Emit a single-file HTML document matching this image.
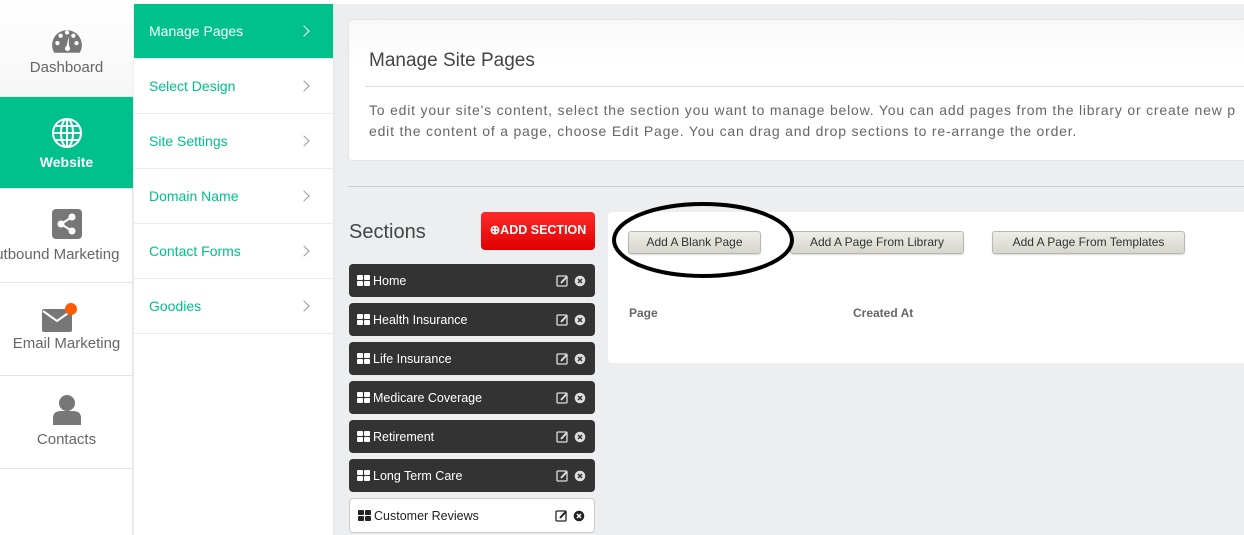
<!DOCTYPE html>
<html><head><style>
*{box-sizing:border-box;margin:0;padding:0}
body{width:1244px;height:535px;overflow:hidden;background:#eceef0;font-family:"Liberation Sans",sans-serif;position:relative}
.side{position:absolute;left:0;top:0;width:133px;height:535px;background:#fff;border-right:1px solid #e6e6e6}
.si{position:absolute;left:0;width:133px;text-align:center;color:#666;font-size:14px;border-bottom:1px solid #e3e3e3}
.si svg{display:block;margin:0 auto}
.col{position:absolute;left:134px;top:4px;width:200px;height:531px;background:#fff;border-right:1px solid #e6e6e6}
.ci{height:55px;border-bottom:1px solid #eaeaea;color:#00c08b;font-size:14px;line-height:54px;padding-left:15px;position:relative}
.ci:after{content:"";position:absolute;right:25px;top:23px;width:7px;height:7px;border-top:1px solid #999;border-right:1px solid #999;transform:rotate(45deg)}
.ci.act{background:#00c08b;color:#fff}
.ci.act:after{border-color:#fff}
.card{position:absolute;left:348px;top:19px;width:900px;height:142px;background:linear-gradient(#f8f8f8,#fff 30%);border-radius:4px;border:1px solid #e4e4e4}
.row{position:absolute;left:349px;width:246px;height:33px;background:#333;border-radius:4px;color:#fff;font-size:12.5px;line-height:35px;padding-left:24px}
.row.w{background:#fff;color:#222;border:1px solid #ccc}
.row i{position:absolute;left:8px;top:11px;width:13px;height:11px;display:grid;grid-template-columns:6px 6px;gap:1px 1px}
.row i b{background:currentColor;border-radius:1px;height:5px}
.ic{position:absolute;right:9px;top:11px;width:30px;height:12px}
.btn{position:absolute;top:231px;height:23px;border:1px solid #b9b9b2;border-radius:3px;background:linear-gradient(#eeeee8,#d6d6ce);font-size:12px;color:#333;line-height:21px;text-align:center;box-shadow:0 1px 1px rgba(0,0,0,.15)}
</style></head><body>
<div style="position:absolute;left:0;top:0;width:1244px;height:4px;background:#fff"></div>
<div class="side">
 <div class="si" style="top:0;height:97px;background:linear-gradient(#fff,#f6f6f6)"><svg width="32" height="26" viewBox="0 0 32 26" style="margin-top:27px;width:34px;height:28px"><path d="M4 24A14 14 0 1 1 28 24Z" fill="#777"/><g fill="#fff"><circle cx="7" cy="15" r="2"/><circle cx="10" cy="8" r="2"/><circle cx="16" cy="5" r="2"/><circle cx="22" cy="8" r="2"/><circle cx="25" cy="15" r="2"/><path d="M15 21L17.5 9L18 21Z"/><circle cx="16.5" cy="20" r="2.4"/></g></svg><div style="margin-top:4px;font-size:15px">Dashboard</div></div>
 <div class="si" style="top:97px;height:92px;background:#00c08b;color:#fff;font-weight:bold"><svg width="32" height="32" viewBox="0 0 32 32" style="margin-top:20px" fill="none" stroke="#fff" stroke-width="2"><circle cx="16" cy="16" r="14"/><ellipse cx="16" cy="16" rx="6" ry="14"/><path d="M2 16H30M4.5 9H27.5M4.5 23H27.5M16 2V30"/></svg><div style="margin-top:5px;font-size:14px">Website</div></div>
 <div class="si" style="top:189px;height:94px"><svg width="30" height="30" viewBox="0 0 30 30" style="margin-top:20px"><rect width="30" height="30" rx="4" fill="#777"/><g fill="#fff"><circle cx="20" cy="8" r="3.5"/><circle cx="9" cy="15" r="3.5"/><circle cx="20" cy="22" r="3.5"/></g><path d="M20 8L9 15L20 22" stroke="#fff" stroke-width="2" fill="none"/></svg><div style="margin-top:7px;white-space:nowrap;margin-left:-30px;font-size:15px">Outbound Marketing</div></div>
 <div class="si" style="top:283px;height:93px"><svg width="36" height="30" viewBox="0 0 36 30" style="margin-top:20px;margin-left:42px"><rect x="0" y="6" width="30" height="23" rx="2" fill="#777"/><path d="M1 8L15 18L29 8" stroke="#fff" stroke-width="2" fill="none"/><circle cx="29" cy="6" r="6" fill="#ff5a00"/></svg><div style="margin-top:2px;font-size:15px">Email Marketing</div></div>
 <div class="si" style="top:376px;height:93px"><svg width="30" height="32" viewBox="0 0 30 32" style="margin-top:18px"><circle cx="15" cy="9" r="8" fill="#777"/><path d="M1 31V24Q1 17 9 17H21Q29 17 29 24V31Z" fill="#777"/></svg><div style="margin-top:5px;font-size:15px">Contacts</div></div>
</div>
<div class="col">
 <div class="ci act">Manage Pages</div><div class="ci">Select Design</div><div class="ci">Site Settings</div><div class="ci">Domain Name</div><div class="ci">Contact Forms</div><div class="ci">Goodies</div>
</div>
<div class="card">
 <div style="position:absolute;left:20px;top:30px;font-size:19px;color:#444">Manage Site Pages</div>
 <div style="position:absolute;left:16px;top:66px;width:884px;border-top:1px solid #e0e0da"></div>
 <div style="position:absolute;left:20px;top:80px;font-size:14px;color:#666;line-height:21px;white-space:nowrap;letter-spacing:0.8px">To edit your site's content, select the section you want to manage below. You can add pages from the library or create new p<br>edit the content of a page, choose Edit Page. You can drag and drop sections to re-arrange the order.</div>
</div>
<div style="position:absolute;left:348px;top:186px;width:896px;border-top:1px solid #ccc"></div>
<div style="position:absolute;left:349px;top:221px;font-size:20px;color:#444">Sections</div>
<div style="position:absolute;left:481px;top:212px;width:114px;height:38px;border-radius:4px;background:linear-gradient(#ff2a2a,#e00000);color:#fff;font-weight:bold;font-size:12.5px;line-height:37px;text-align:center">⊕ADD SECTION</div>
<div class="row" style="top:264px"><i><b></b><b></b><b></b><b></b></i>Home<svg class="ic" viewBox="0 0 30 12"><rect x="1" y="1" width="10" height="10" rx="1" fill="none" stroke="#ddd" stroke-width="1.3"/><path d="M5 8L11 1.5" stroke="#ddd" stroke-width="2"/><circle cx="24" cy="6" r="5.3" fill="#ddd"/><path d="M22 4L26 8M26 4L22 8" stroke="#333" stroke-width="1.5"/></svg></div>
<div class="row" style="top:303px"><i><b></b><b></b><b></b><b></b></i>Health Insurance<svg class="ic" viewBox="0 0 30 12"><rect x="1" y="1" width="10" height="10" rx="1" fill="none" stroke="#ddd" stroke-width="1.3"/><path d="M5 8L11 1.5" stroke="#ddd" stroke-width="2"/><circle cx="24" cy="6" r="5.3" fill="#ddd"/><path d="M22 4L26 8M26 4L22 8" stroke="#333" stroke-width="1.5"/></svg></div>
<div class="row" style="top:342px"><i><b></b><b></b><b></b><b></b></i>Life Insurance<svg class="ic" viewBox="0 0 30 12"><rect x="1" y="1" width="10" height="10" rx="1" fill="none" stroke="#ddd" stroke-width="1.3"/><path d="M5 8L11 1.5" stroke="#ddd" stroke-width="2"/><circle cx="24" cy="6" r="5.3" fill="#ddd"/><path d="M22 4L26 8M26 4L22 8" stroke="#333" stroke-width="1.5"/></svg></div>
<div class="row" style="top:381px"><i><b></b><b></b><b></b><b></b></i>Medicare Coverage<svg class="ic" viewBox="0 0 30 12"><rect x="1" y="1" width="10" height="10" rx="1" fill="none" stroke="#ddd" stroke-width="1.3"/><path d="M5 8L11 1.5" stroke="#ddd" stroke-width="2"/><circle cx="24" cy="6" r="5.3" fill="#ddd"/><path d="M22 4L26 8M26 4L22 8" stroke="#333" stroke-width="1.5"/></svg></div>
<div class="row" style="top:420px"><i><b></b><b></b><b></b><b></b></i>Retirement<svg class="ic" viewBox="0 0 30 12"><rect x="1" y="1" width="10" height="10" rx="1" fill="none" stroke="#ddd" stroke-width="1.3"/><path d="M5 8L11 1.5" stroke="#ddd" stroke-width="2"/><circle cx="24" cy="6" r="5.3" fill="#ddd"/><path d="M22 4L26 8M26 4L22 8" stroke="#333" stroke-width="1.5"/></svg></div>
<div class="row" style="top:459px"><i><b></b><b></b><b></b><b></b></i>Long Term Care<svg class="ic" viewBox="0 0 30 12"><rect x="1" y="1" width="10" height="10" rx="1" fill="none" stroke="#ddd" stroke-width="1.3"/><path d="M5 8L11 1.5" stroke="#ddd" stroke-width="2"/><circle cx="24" cy="6" r="5.3" fill="#ddd"/><path d="M22 4L26 8M26 4L22 8" stroke="#333" stroke-width="1.5"/></svg></div>
<div class="row w" style="top:498px;height:35px"><i><b></b><b></b><b></b><b></b></i>Customer Reviews<svg class="ic" viewBox="0 0 30 12"><rect x="1" y="1" width="10" height="10" rx="1" fill="none" stroke="#222" stroke-width="1.3"/><path d="M5 8L11 1.5" stroke="#222" stroke-width="2"/><circle cx="24" cy="6" r="5.3" fill="#222"/><path d="M22 4L26 8M26 4L22 8" stroke="#fff" stroke-width="1.5"/></svg></div>
<div style="position:absolute;left:608px;top:212px;width:640px;height:151px;background:#fff;border-radius:4px"></div>
<div class="btn" style="left:628px;width:133px">Add A Blank Page</div>
<div class="btn" style="left:790px;width:174px">Add A Page From Library</div>
<div class="btn" style="left:992px;width:193px">Add A Page From Templates</div>
<div style="position:absolute;left:629px;top:306px;font-size:12px;font-weight:bold;color:#666">Page</div>
<div style="position:absolute;left:853px;top:306px;font-size:12px;font-weight:bold;color:#666">Created At</div>
<svg style="position:absolute;left:608px;top:198px" width="190" height="84"><ellipse cx="95" cy="42" rx="89" ry="36" fill="none" stroke="#000" stroke-width="4"/></svg>
</body></html>
